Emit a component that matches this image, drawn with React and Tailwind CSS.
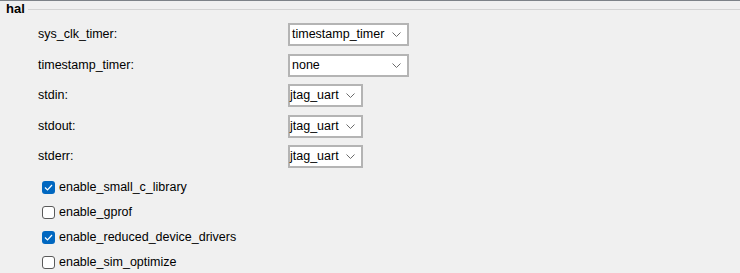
import React from "react";

const rows = [
  { label: "sys_clk_timer:", value: "timestamp_timer", wide: true },
  { label: "timestamp_timer:", value: "none", wide: true },
  { label: "stdin:", value: "jtag_uart" },
  { label: "stdout:", value: "jtag_uart" },
  { label: "stderr:", value: "jtag_uart" },
];

const checks = [
  { label: "enable_small_c_library", on: true },
  { label: "enable_gprof", on: false },
  { label: "enable_reduced_device_drivers", on: true },
  { label: "enable_sim_optimize", on: false },
];

const Chevron = () => (
  <svg width="9" height="5" viewBox="0 0 9 5" className="shrink-0">
    <polyline points="0.5,0.5 4.5,4.5 8.5,0.5" fill="none" stroke="#6b6b6b" strokeWidth="1" />
  </svg>
);

const Select = ({ value, wide }) => (
  <div
    className={
      wide
        ? "flex items-center justify-between w-[121px] h-[23px] bg-white border-2 border-[#b4b4b4] pl-[2px] pr-[6px]"
        : "flex items-center justify-between w-[75px] h-[23px] bg-white border-2 border-[#b4b4b4] pl-[0px] pr-[6px]"
    }
  >
    <span>{value}</span>
    <Chevron />
  </div>
);

const Check = ({ on }) =>
  on ? (
    <div className="w-[13px] h-[13px] rounded-[3px] bg-[#0067c0] flex items-center justify-center">
      <svg width="9" height="7" viewBox="0 0 9 7">
        <polyline points="1,3.5 3.5,6 8,1" fill="none" stroke="#ffffff" strokeWidth="1.2" />
      </svg>
    </div>
  ) : (
    <div className="w-[13px] h-[13px] rounded-[3px] bg-white border border-[#5a5a5a]" />
  );

export default function App() {
  return (
    <div className="w-[740px] h-[273px] overflow-hidden bg-[#f0f0f0] border-t border-[#7d8288] text-[12.5px] text-black font-['Liberation_Sans',Arial,sans-serif]">
      <div className="flex items-center h-[15px] pl-[6px]">
        <span className="font-bold text-[13px] leading-none">hal</span>
        <div className="flex-1 h-px bg-[#d4d4d4] ml-[3px] mt-[1px]" />
      </div>

      <div className="flex flex-col gap-[7.5px] mt-[7px] pl-[38px]">
        {rows.map((r) => (
          <div key={r.label} className="flex items-center h-[23px]">
            <span className="w-[250px]">{r.label}</span>
            <Select value={r.value} wide={r.wide} />
          </div>
        ))}
      </div>

      <div className="flex flex-col mt-[7px] pl-[42px]">
        {checks.map((c) => (
          <div key={c.label} className="flex items-center gap-[4px] h-[25px]">
            <Check on={c.on} />
            <span>{c.label}</span>
          </div>
        ))}
      </div>
    </div>
  );
}
